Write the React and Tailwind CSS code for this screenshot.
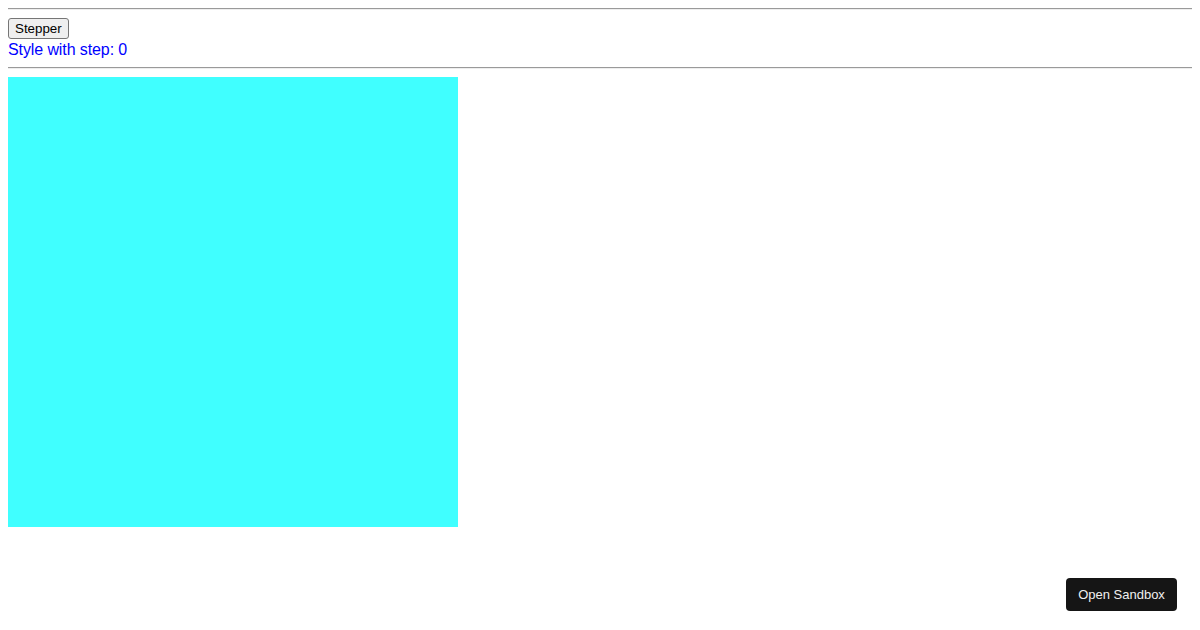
export default function App() {
  return (
    <div className="relative w-[1200px] h-[630px] bg-white p-2" style={{ fontFamily: '"Liberation Sans", Arial, sans-serif' }}>
      <div className="h-[2px] border-t border-t-[#9a9a9a] border-b border-b-[#eeeeee]" />
      <div className="mt-2 h-[22px]">
        <button className="block h-[21px] px-[6px] text-[13.33px] leading-none text-black bg-[#efefef] border border-[#767676] rounded-[3px]">
          Stepper
        </button>
      </div>
      <div className="text-[16px] leading-[19px] text-[#0000ff] tracking-[-0.1px]">Style with step: 0</div>
      <div className="mt-2 h-[2px] border-t border-t-[#9a9a9a] border-b border-b-[#eeeeee]" />
      <div className="mt-2 w-[450px] h-[450px] bg-[#40ffff]" />
      <div className="absolute left-[1066px] top-[578px] w-[111px] h-[33px] rounded-[4px] bg-[#151515] flex items-center justify-center text-[13px] text-[#f0f0f0]">
        Open Sandbox
      </div>
    </div>
  );
}
